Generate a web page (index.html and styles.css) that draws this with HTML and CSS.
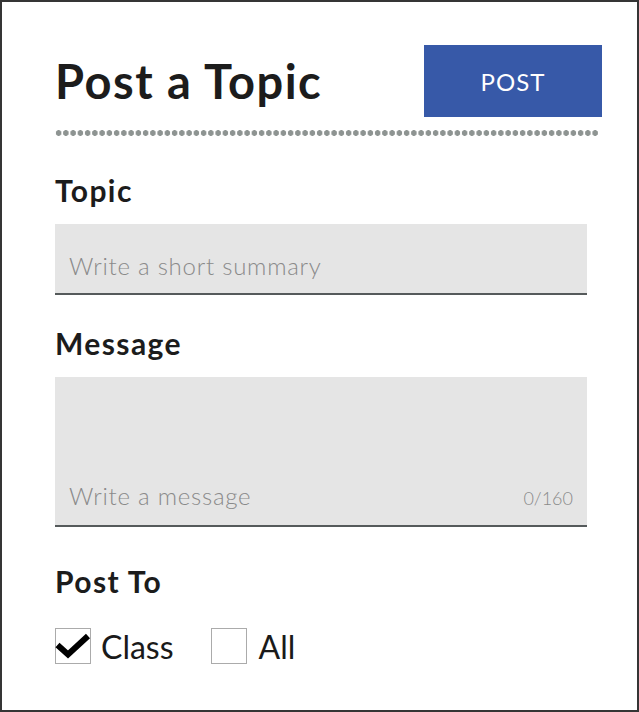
FILE: index.html
```html
<!DOCTYPE html>
<html lang="en">
<head>
<meta charset="utf-8">
<title>Post a Topic</title>
<link rel="stylesheet" href="styles.css">
</head>
<body>
<div class="card">
  <div class="header">
    <h1 class="title">Post a Topic</h1>
    <button class="post-btn" type="button">POST</button>
  </div>
  <div class="dots"></div>

  <div class="label label-topic">Topic</div>
  <div class="field field-short">
    <span class="placeholder">Write a short summary</span>
  </div>

  <div class="label label-message">Message</div>
  <div class="field field-long">
    <span class="placeholder">Write a message</span>
    <span class="counter">0/160</span>
  </div>

  <div class="label label-postto">Post To</div>
  <div class="options">
    <label class="option">
      <span class="box">
        <svg class="check" width="36" height="36" viewBox="0 0 36 36"><polyline points="2.5,17 13,26.5 33,8" fill="none" stroke="#000" stroke-width="6" stroke-linejoin="miter"/></svg>
      </span>
      <span class="option-text">Class</span>
    </label>
    <label class="option">
      <span class="box"></span>
      <span class="option-text">All</span>
    </label>
  </div>
</div>
</body>
</html>
```

FILE: styles.css
```css
* { box-sizing: border-box; }

html, body {
  margin: 0;
  padding: 0;
  background: #ffffff;
}

.card {
  width: 639px;
  height: 712px;
  border: 2px solid #353535;
  padding: 43px 35px 0 53px;
  font-family: "Lato", "Liberation Sans", sans-serif;
  color: #1d1d1d;
  display: flex;
  flex-direction: column;
}

.header {
  display: flex;
  justify-content: space-between;
  align-items: center;
}

.title {
  margin: 0;
  font-size: 47px;
  line-height: 56px;
  font-weight: 700;
  letter-spacing: 1.5px;
  color: #1c1c1c;
}

.post-btn {
  width: 178px;
  height: 72px;
  border: 0;
  padding: 0;
  background: #3759a8;
  color: #ffffff;
  font-family: "Lato", "Liberation Sans", sans-serif;
  font-size: 24px;
  letter-spacing: 1px;
  font-weight: 400;
}

.dots {
  margin-top: 13px;
  width: 543px;
  height: 6px;
  background-image: radial-gradient(circle at center, #8e9492 2.6px, rgba(142,148,146,0) 3.1px);
  background-size: 7.25px 6px;
  background-repeat: repeat-x;
}

.label {
  font-size: 30px;
  line-height: 36px;
  font-weight: 700;
  letter-spacing: 1.4px;
  color: #1c1c1c;
}

.label-topic { margin-top: 36px; }
.label-message { margin-top: 30px; }
.label-postto { margin-top: 36px; }

.field {
  width: 532px;
  margin-top: 16px;
  background: #e5e5e5;
  border-bottom: 2px solid #555a5b;
  display: flex;
  align-items: flex-end;
  justify-content: space-between;
  padding: 0 14px 13px 14px;
}

.field-short { height: 71px; }
.field-long { height: 150px; align-items: baseline; align-content: flex-end; flex-wrap: wrap; }

.placeholder {
  font-size: 24px;
  line-height: 28px;
  font-weight: 300;
  color: #8a8a8a;
  letter-spacing: 0.75px;
}

.counter {
  font-size: 18px;
  line-height: 28px;
  font-weight: 300;
  color: #8a8a8a;
  margin-right: 0;
}

.options {
  margin-top: 27px;
  display: flex;
  align-items: center;
}

.option {
  display: flex;
  align-items: center;
}

.option + .option { margin-left: 37px; }

.box {
  width: 36px;
  height: 36px;
  border: 1px solid #ababab;
  position: relative;
  display: block;
}

.check {
  position: absolute;
  left: -1px;
  top: -1px;
}

.option-text {
  margin-left: 10px;
  padding-top: 3px;
  font-size: 32px;
  line-height: 36px;
  font-weight: 400;
  color: #1a1a1a;
}

.option + .option .option-text { margin-left: 12px; }
```
